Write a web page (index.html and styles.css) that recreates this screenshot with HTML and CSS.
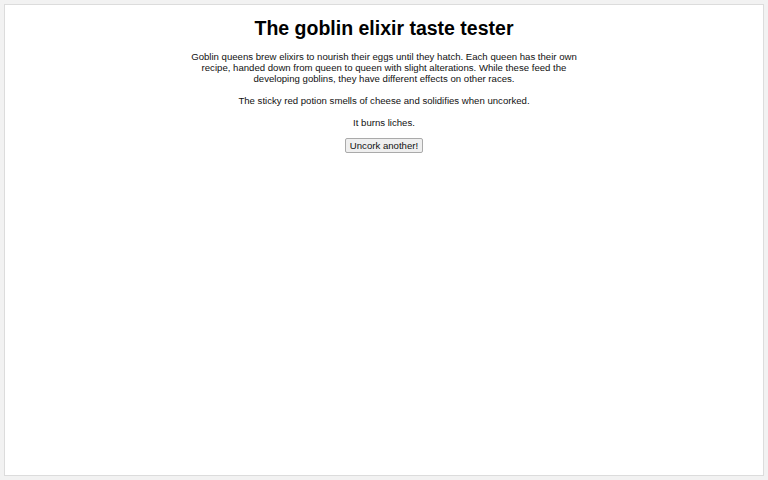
FILE: index.html
```html
<!DOCTYPE html>
<html>
<head>
  <title>The goblin elixir taste tester</title>
  <meta charset="utf-8">
  <link rel="stylesheet" href="styles.css">
</head>
<body>
  <div class="page">
    <h1>The goblin elixir taste tester</h1>

    <div class="story">
      <p>Goblin queens brew elixirs to nourish their eggs until they hatch. Each queen has their own recipe, handed down from queen to queen with slight alterations. While these feed the developing goblins, they have different effects on other races.</p>
      <p id="potion">The sticky red potion smells of cheese and solidifies when uncorked.</p>
      <p id="effect">It burns liches.</p>
      <button id="uncorkBtn">Uncork another!</button>
    </div>
  </div>
</body>
</html>
```

FILE: styles.css
```css
html {
  height: 100%;
}

body {
  font-family: "Liberation Sans", Arial, sans-serif;
  background-color: #f2f2f2;
  margin: 0;
  padding: 4px;
  height: 100%;
  box-sizing: border-box;
}

.page {
  height: 100%;
  box-sizing: border-box;
  background-color: #fff;
  border: 1px solid #dcdcdc;
  text-align: center;
  padding-top: 12px;
}

h1 {
  font-size: 19.5px;
  margin: 0 0 11px 0;
}

.story {
  width: 400px;
  margin: 0 auto;
  font-size: 9.6px;
  line-height: 11px;
  color: #111;
}

.story p {
  margin: 0 0 11px 0;
}

#effect {
  margin-bottom: 10px;
}

button {
  font-family: "Liberation Sans", Arial, sans-serif;
  font-size: 9.6px;
  padding: 1px 4px;
  background-color: #efefef;
  border: 1px solid #aaa;
  border-radius: 2px;
  color: #111;
}
```
